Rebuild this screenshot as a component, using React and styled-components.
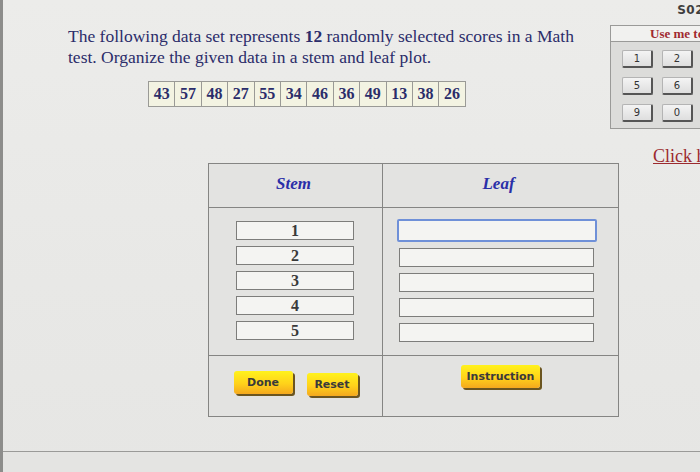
import styled, { createGlobalStyle } from 'styled-components';

const Global = createGlobalStyle`
  html, body {
    margin: 0;
    padding: 0;
    background: #e9e9e7;
    overflow: hidden;
  }
`;

const Page = styled.div`
  width: 700px;
  height: 472px;
  box-sizing: border-box;
  border-left: 3px solid #8d8d8b;
  background: linear-gradient(180deg, #ececea 0%, #e8e8e6 60%, #e6e6e4 100%);
  display: flex;
  flex-direction: column;
  overflow: hidden;
`;

const TopRow = styled.div`
  display: flex;
  align-items: flex-start;
  height: 163px;
`;

const Question = styled.div`
  flex-shrink: 0;
  width: 544px;
  padding: 26px 0 0 65px;
  box-sizing: content-box;
`;

const Text = styled.p`
  margin: 0;
  font-family: 'Liberation Serif', serif;
  font-size: 17.5px;
  line-height: 21px;
  color: #2b2d6a;

  b {
    font-weight: bold;
  }
`;

const DataRow = styled.div`
  display: flex;
  margin: 13px 0 0 80px;
  width: max-content;
  border: 1px solid #9a9a96;
  border-right: none;
`;

const DataCell = styled.div`
  width: 25.4px;
  height: 24px;
  box-sizing: content-box;
  border-right: 1px solid #9a9a96;
  background: #f3f3e2;
  display: flex;
  align-items: center;
  justify-content: center;
  font-family: 'Liberation Serif', serif;
  font-weight: bold;
  font-size: 16px;
  color: #2b2d6a;
`;

const Side = styled.div`
  flex: 1;
  min-width: 0;
  display: flex;
  flex-direction: column;
  align-items: flex-start;
`;

const Code = styled.div`
  align-self: flex-end;
  margin: 3px -4px 0 0;
  font-family: 'DejaVu Sans', sans-serif;
  font-weight: bold;
  font-size: 12px;
  color: #3e3e3e;
  letter-spacing: 0.5px;
`;

const Keypad = styled.div`
  margin: 8px 0 0 -2px;
  width: 100px;
  flex-shrink: 0;
  height: 104px;
  box-sizing: border-box;
  border: 1px solid #9a9a98;
  background: #dcdcda;
`;

const KeypadHead = styled.div`
  height: 15px;
  background: #f1f1ef;
  border-bottom: 1px solid #9a9a98;
  padding-left: 39px;
  font-family: 'Liberation Serif', serif;
  font-weight: bold;
  font-size: 13px;
  line-height: 16px;
  color: #a02a30;
  white-space: nowrap;
  overflow: hidden;
`;

const KeyGrid = styled.div`
  display: grid;
  grid-template-columns: 31px 31px;
  column-gap: 9px;
  row-gap: 9px;
  padding: 8px 0 0 11px;
`;

const Key = styled.div`
  height: 18px;
  box-sizing: border-box;
  background: linear-gradient(180deg, #f4f4f4 0%, #dedede 100%);
  border: 1px solid #b4b4b4;
  border-right: 2px solid #555;
  border-bottom: 2px solid #555;
  border-radius: 2px;
  display: flex;
  align-items: center;
  justify-content: center;
  font-family: 'DejaVu Sans', sans-serif;
  font-size: 10px;
  color: #333;
`;

const ClickLink = styled.a`
  margin: 17px 0 0 41px;
  font-family: 'Liberation Serif', serif;
  font-size: 18px;
  color: #9c2a2f;
  text-decoration: underline;
  white-space: nowrap;
`;

const Table = styled.div`
  margin-left: 205px;
  width: 409px;
  display: grid;
  grid-template-columns: 174px 1fr;
  grid-template-rows: 44px 148px 60px;
  border: 1px solid #858583;
  background: #e3e3e1;
`;

const Cell = styled.div`
  border-right: ${(p) => (p.$last ? 'none' : '1px solid #858583')};
  border-bottom: ${(p) => (p.$bottom ? 'none' : '1px solid #858583')};
  display: flex;
  flex-direction: column;
  align-items: ${(p) => p.$align || 'center'};
  justify-content: ${(p) => p.$justify || 'center'};
`;

const HeadText = styled.span`
  font-family: 'Liberation Serif', serif;
  font-style: italic;
  font-weight: bold;
  font-size: 17px;
  color: #2a2fa8;
  margin-left: ${(p) => p.$shift || 0}px;
  margin-top: -3px;
`;

const InputStack = styled.div`
  display: flex;
  flex-direction: column;
  gap: 6px;
  padding-top: ${(p) => p.$top}px;
  padding-left: ${(p) => p.$left}px;
`;

const StemBox = styled.div`
  width: 118px;
  height: 19px;
  box-sizing: border-box;
  border: 1px solid #7d7d7b;
  background: #f4f4f2;
  display: flex;
  align-items: center;
  justify-content: center;
  font-family: 'Liberation Serif', serif;
  font-weight: bold;
  font-size: 16px;
  color: #3a3a3a;
`;

const LeafBox = styled.div`
  height: ${(p) => (p.$focus ? 23 : 19)}px;
  margin: ${(p) => (p.$focus ? '-2px 0 0 -2px' : '0')};
  width: ${(p) => (p.$focus ? 200 : 195)}px;
  box-sizing: border-box;
  border: ${(p) => (p.$focus ? '2px solid #6f90d8' : '1px solid #7d7d7b')};
  border-radius: ${(p) => (p.$focus ? '2px' : '0')};
  background: #f4f4f2;
`;

const ButtonRow = styled.div`
  display: flex;
  align-items: flex-start;
  gap: 14px;
  padding: ${(p) => p.$pad};
`;

const YellowButton = styled.button`
  width: ${(p) => p.$w}px;
  height: 23px;
  margin-top: ${(p) => p.$dy || 0}px;
  padding: 0;
  border: none;
  border-radius: 3px;
  background: linear-gradient(180deg, #fff21c 0%, #ffd21a 55%, #f4a81e 100%);
  box-shadow: 2px 2px 0 #6b5520;
  font-family: 'DejaVu Sans', sans-serif;
  font-weight: bold;
  font-size: 11px;
  color: #3a3a3a;
  cursor: pointer;
`;

const Footer = styled.div`
  margin-top: 34px;
  flex: 1;
  border-top: 1px solid #9a9a98;
  background: #e4e4e2;
`;

const data = [43, 57, 48, 27, 55, 34, 46, 36, 49, 13, 38, 26];
const keys = ['1', '2', '5', '6', '9', '0'];
const stems = [1, 2, 3, 4, 5];

const App = () => {
  return (
    <>
      <Global />
      <Page>
        <TopRow>
          <Question>
            <Text>
              The following data set represents <b>12</b> randomly selected scores in a Math
              <br />
              test. Organize the given data in a stem and leaf plot.
            </Text>
            <DataRow>
              {data.map((n, i) => (
                <DataCell key={i}>{n}</DataCell>
              ))}
            </DataRow>
          </Question>
          <Side>
            <Code>S02</Code>
            <Keypad>
              <KeypadHead>Use me to type</KeypadHead>
              <KeyGrid>
                {keys.map((k) => (
                  <Key key={k}>{k}</Key>
                ))}
              </KeyGrid>
            </Keypad>
            <ClickLink>Click here</ClickLink>
          </Side>
        </TopRow>

        <Table>
          <Cell>
            <HeadText $shift={-4}>Stem</HeadText>
          </Cell>
          <Cell $last>
            <HeadText $shift={-4}>Leaf</HeadText>
          </Cell>
          <Cell $justify="flex-start" $align="flex-start">
            <InputStack $top={13} $left={27}>
              {stems.map((s) => (
                <StemBox key={s}>{s}</StemBox>
              ))}
            </InputStack>
          </Cell>
          <Cell $last $justify="flex-start" $align="flex-start">
            <InputStack $top={13} $left={16}>
              {stems.map((s) => (
                <LeafBox key={s} $focus={s === 1} />
              ))}
            </InputStack>
          </Cell>
          <Cell $bottom>
            <ButtonRow $pad="0 0 6px 0">
              <YellowButton $w={59}>Done</YellowButton>
              <YellowButton $w={51} $dy={2}>Reset</YellowButton>
            </ButtonRow>
          </Cell>
          <Cell $bottom $last $justify="flex-start">
            <ButtonRow $pad="9px 0 0 0">
              <YellowButton $w={79}>Instruction</YellowButton>
            </ButtonRow>
          </Cell>
        </Table>

        <Footer />
      </Page>
    </>
  );
};

export default App;
